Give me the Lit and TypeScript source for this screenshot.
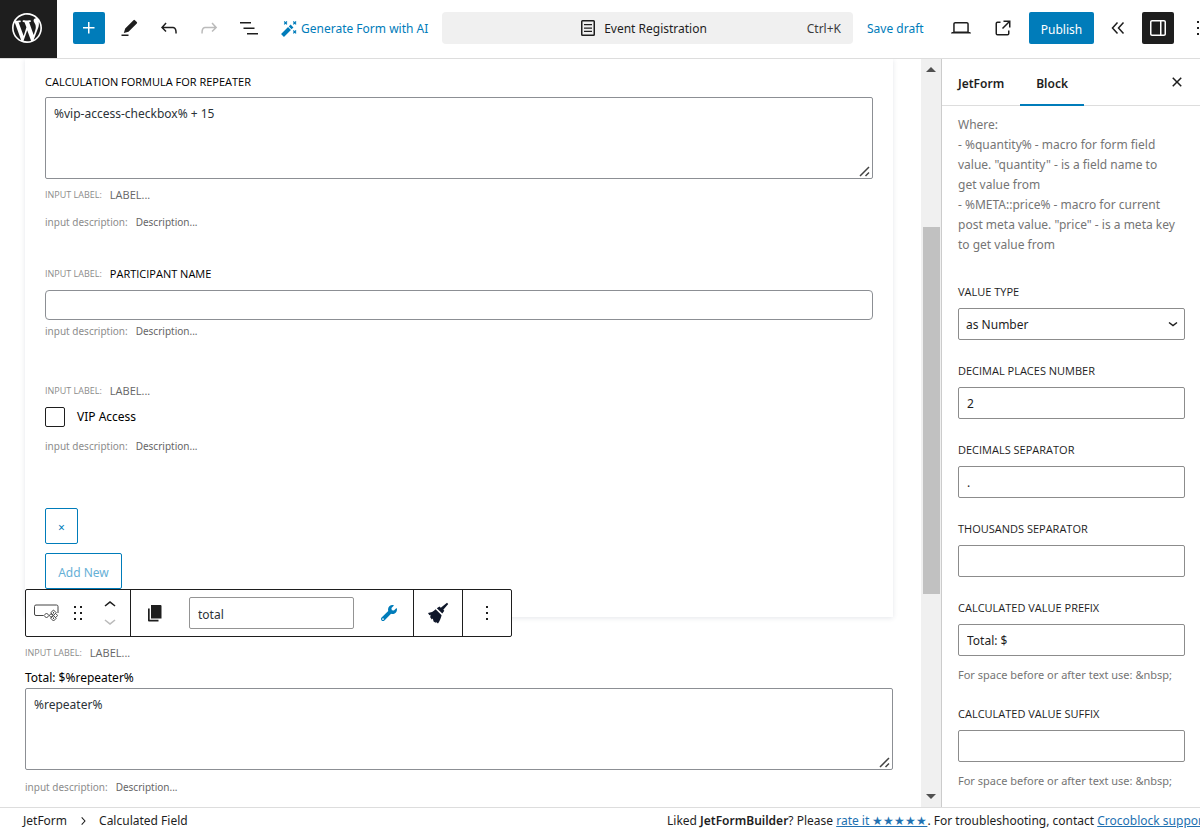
import { LitElement, html, css, svg, nothing } from "lit";
import { customElement } from "lit/decorators.js";
import { styleMap } from "lit/directives/style-map.js";

const icon = (d: string, size = 24) => html`
  <svg width=${size} height=${size} viewBox="0 0 24 24" fill="currentColor" aria-hidden="true">
    <path fill-rule="evenodd" d=${d}></path>
  </svg>`;

const ICONS = {
  plus: "M11 12.5V17.5H12.5V12.5H17.5V11H12.5V6H11V11H6V12.5H11Z",
  edit: "M17.900 4.200 19.800 6.100a1 1 0 0 1 0 1.400L11.500 15.700 6.800 17.100 8.200 12.500 16.500 4.200a1 1 0 0 1 1.400 0ZM4.500 18.500H11.500V20H4.500Z",
  undo: "M18.3 11.7c-.6-.6-1.4-.9-2.3-.9H6.7l2.9-3.3-1.1-1-4.5 5L8.5 16l1-1-2.7-2.7H16c.5 0 .9.2 1.3.5 1 1 1 3.4 1 4.5v.3h1.5v-.2c0-1.5 0-4.3-1.5-5.7z",
  redo: "M15.6 6.5l-1.1 1 2.9 3.3H8c-.9 0-1.7.3-2.3.9-1.4 1.5-1.4 4.2-1.4 5.6v.2h1.5v-.3c0-1.1 0-3.5 1-4.5.3-.3.7-.5 1.3-.5h9.2L14.5 15l1.1 1.1 4.6-4.6-4.6-5z",
  list: "M3 6h11v1.5H3V6Zm3.5 5.5h11V13h-11v-1.5ZM21 17H10v1.5h11V17Z",
  desktop: "M20.5 16h-.7V8c0-1.1-.9-2-2-2H6.2c-1.1 0-2 .9-2 2v8h-.7c-.8 0-1.5.7-1.5 1.5h20c0-.8-.7-1.5-1.5-1.5zM5.7 8c0-.3.2-.5.5-.5h11.6c.3 0 .5.2.5.5v7.6H5.7V8z",
  external: "M19.5 4.5h-7V6h4.44l-5.97 5.97 1.06 1.06L18 7.06v4.44h1.5v-7Zm-13 1a2 2 0 0 0-2 2v10a2 2 0 0 0 2 2h10a2 2 0 0 0 2-2v-3H17v3a.5.5 0 0 1-.5.5h-10a.5.5 0 0 1-.5-.5v-10a.5.5 0 0 1 .5-.5h3V5.5h-3Z",
  drawer: "M18 4H6c-1.1 0-2 .9-2 2v12c0 1.1.9 2 2 2h12c1.1 0 2-.9 2-2V6c0-1.1-.9-2-2-2zm-4 14.5H6c-.3 0-.5-.2-.5-.5V6c0-.3.2-.5.5-.5h8v13zm4.5-.5c0 .3-.2.5-.5.5h-2.5v-13H18c.3 0 .5.2.5.5v12z",
  more: "M13 19h-2v-2h2v2zm0-6h-2v-2h2v2zm0-6h-2V5h2v2z",
  close: "M12 13.06l3.712 3.713 1.061-1.06L13.061 12l3.712-3.712-1.06-1.06L12 10.938 8.288 7.227l-1.061 1.06L10.939 12l-3.712 3.712 1.06 1.061L12 13.061z",
  drag: "M8 7h2V5H8v2zm0 6h2v-2H8v2zm0 6h2v-2H8v2zm6-14v2h2V5h-2zm0 8h2v-2h-2v2zm0 6h2v-2h-2v2z",
  up: "M6.5 12.4L12 8l5.5 4.4-.9 1.2L12 10l-4.5 3.6-1-1.2z",
  down: "M17.5 11.6L12 16l-5.5-4.4.9-1.2L12 14l4.5-3.6 1 1.2z",
  right: "M10.6 6L9.4 7l4.6 5-4.6 5 1.2 1 5.4-6z",
  form: "M6.500 4h11a1.500 1.500 0 0 1 1.500 1.500v13a1.500 1.500 0 0 1-1.500 1.500h-11A1.500 1.500 0 0 1 5 18.500v-13A1.500 1.500 0 0 1 6.500 4Zm0 1.500v13h11v-13h-11ZM8 8h8v1.300H8V8Zm0 3.400h8v1.300H8v-1.300Zm0 3.400h8v1.300H8v-1.300Z",
  copy: "M8 4h9.500a1 1 0 0 1 1 1v12.500H8V4ZM5 7.500h1.700v11.300H15.500v1.700H6a1 1 0 0 1-1-1V7.500Z",
};

const wordpress = svg`<path d="M20 10c0-5.51-4.49-10-10-10C4.48 0 0 4.49 0 10c0 5.52 4.48 10 10 10 5.51 0 10-4.48 10-10zM7.78 15.37L4.37 6.22c.55-.02 1.17-.08 1.17-.08.5-.06.44-1.13-.06-1.11 0 0-1.45.11-2.37.11-.18 0-.37 0-.58-.01C4.12 2.69 6.87 1.11 10 1.11c2.33 0 4.45.87 6.05 2.34-.68-.11-1.65.39-1.65 1.58 0 .74.45 1.36.9 2.1.35.61.55 1.36.55 2.46 0 1.49-1.4 5-1.4 5l-3.03-8.37c.54-.02.82-.17.82-.17.5-.05.44-1.25-.06-1.22 0 0-1.44.12-2.38.12-.87 0-2.33-.12-2.33-.12-.5-.03-.56 1.2-.06 1.22l.92.08 1.26 3.41zM17.41 10c.24-.64.74-1.87.43-4.25.7 1.29 1.05 2.71 1.05 4.25 0 3.29-1.73 6.24-4.4 7.78.97-2.59 1.94-5.2 2.92-7.78zM6.1 18.09C3.12 16.65 1.11 13.53 1.11 10c0-1.3.23-2.48.72-3.59C3.25 10.3 4.67 14.2 6.1 18.09zm4.03-6.63l2.58 6.98c-.86.29-1.76.45-2.71.45-.79 0-1.57-.11-2.29-.33.81-2.38 1.62-4.74 2.42-7.1z"/>`;

interface Setting {
  id: string;
  label: string;
  value: string;
  help?: string;
  options?: string[];
}

const NBSP_HELP = "For space before or after text use: &nbsp;";

const SETTINGS: Setting[] = [
  { id: "value-type", label: "Value type", value: "as Number", options: ["as Number", "as String", "as Date"] },
  { id: "decimal-places", label: "Decimal places number", value: "2" },
  { id: "decimals-separator", label: "Decimals separator", value: "." },
  { id: "thousands-separator", label: "Thousands separator", value: "" },
  { id: "value-prefix", label: "Calculated value prefix", value: "Total: $", help: NBSP_HELP },
  { id: "value-suffix", label: "Calculated value suffix", value: "", help: NBSP_HELP },
];

const shared = css`
  * { box-sizing: border-box; }
  button, input, textarea, select { font: inherit; color: inherit; margin: 0; }
  button { border: 0; background: none; padding: 0; display: flex; align-items: center; justify-content: center; flex: none; }
  a { color: #2271b1; }
  svg { display: block; flex: none; }
`;

@customElement("editor-header")
export class EditorHeader extends LitElement {
  static styles = [shared, css`
    :host { display: block; overflow: hidden; border-bottom: 1px solid #ddd; background: #fff; }
    .bar { display: flex; align-items: center; height: 58px; padding-bottom: 2px; margin-right: -14px; }
    .logo { width: 57px; height: 58px; background: #1e1e1e; color: #fff; padding: 0 4px 2px 0; margin-bottom: -2px; flex: none; display: flex; align-items: center; justify-content: center; }
    .tools { display: flex; align-items: center; gap: 8px; padding-left: 16px; flex: none; }
    .tool { width: 32px; height: 32px; border-radius: 2px; }
    .primary { background: #007cba; color: #fff; }
    .faded { color: #bbb; }
    .link { color: #007cba; text-decoration: none; line-height: 20px; padding-top: 2px; display: flex; align-items: center; gap: 4px; white-space: nowrap; }
    .generate { min-width: 149px; margin-left: 8px; }
    .center { flex: 1; min-width: 0; height: 32px; margin: 0 14px 0 12px; padding: 0 12px 0 0; border-radius: 4px; background: #f0f0f0; display: grid; grid-template-columns: 1fr auto 1fr; align-items: center; }
    .title { grid-column: 2; display: flex; align-items: center; gap: 4px; }
    .keys { justify-self: end; color: #3c3c3c; }
    .actions { display: flex; align-items: center; flex: none; }
    .draft { min-width: 58px; margin-right: 20px; }
    .preview { margin-right: 10px; }
    .view { margin-right: 10px; }
    .publish { height: 32px; min-width: 65px; padding: 2px 8px 0; border-radius: 2px; margin-right: 8px; }
    .active { background: #1e1e1e; color: #fff; margin: 0 8px; }
  `];

  render() {
    return html`
      <div class="bar">
        <a class="logo" href="#" aria-label="View forms">
          <svg width="30" height="30" viewBox="0 0 20 20" fill="currentColor">${wordpress}</svg>
        </a>
        <div class="tools">
          <button class="tool primary" aria-label="Toggle block inserter">${icon(ICONS.plus)}</button>
          <button class="tool" aria-label="Tools">${icon(ICONS.edit)}</button>
          <button class="tool" aria-label="Undo">${icon(ICONS.undo)}</button>
          <button class="tool faded" aria-label="Redo">${icon(ICONS.redo)}</button>
          <button class="tool" aria-label="Document overview">${icon(ICONS.list)}</button>
          <a class="link generate" href="#">
            <svg width="16" height="16" viewBox="0 0 16 16" fill="none" stroke="currentColor">
              <path d="M1.500 14.500 8.500 7.500" stroke-width="4"></path>
              <path d="M9.200 6.800 11 5" stroke-width="4"></path>
              <path d="M3.200.500 6 3.300M6 .500 3.200 3.300M12.300.500l2.800 2.800M15.100.500l-2.800 2.800M12.300 9.500l2.800 2.800M15.100 9.500l-2.800 2.800" stroke-width="1.200"></path>
            </svg>
            <span>Generate Form with AI</span>
          </a>
        </div>
        <button class="center">
          <span class="title">${icon(ICONS.form)}<span>Event Registration</span></span>
          <span class="keys">Ctrl+K</span>
        </button>
        <div class="actions">
          <a class="link draft" href="#">Save draft</a>
          <button class="tool view" aria-label="View">${icon(ICONS.desktop)}</button>
          <button class="tool preview" aria-label="Open in new tab">${icon(ICONS.external)}</button>
          <button class="publish primary">Publish</button>
          <button class="tool" aria-label="Collapse">
            <svg width="24" height="24" viewBox="0 0 24 24" fill="none" stroke="currentColor" stroke-width="1.500">
              <path d="M11.500 6.500 6.500 12l5 5.500M17.500 6.500 12.500 12l5 5.500"></path>
            </svg>
          </button>
          <button class="tool active" aria-label="Settings">${icon(ICONS.drawer)}</button>
          <button class="tool" aria-label="Options">${icon(ICONS.more)}</button>
        </div>
      </div>`;
  }
}

@customElement("block-toolbar")
export class BlockToolbar extends LitElement {
  static styles = [shared, css`
    :host { display: flex; height: 48px; background: #fff; border: 1px solid #1e1e1e; border-radius: 2px; }
    .group { display: flex; align-items: center; border-right: 1px solid #1e1e1e; }
    .group:last-child { border-right: 0; }
    .first { padding: 0 8px; }
    .drag { width: 20px; margin-left: 8px; }
    .mover { display: flex; flex-direction: column; margin-left: 10px; }
    .mover button { width: 24px; height: 16px; overflow: hidden; }
    .off { color: #bbb; }
    .square { width: 48px; height: 46px; }
    .name { width: 165px; height: 32px; margin: 0 11px 0 10px; padding: 2px 8px 0; border: 1px solid #949494; border-radius: 2px; color: #2c3338; outline: 0; }
    .wrench { color: #007cba; }
  `];

  render() {
    return html`
      <div class="group first">
        <button aria-label="Calculated Field">
          <svg width="26" height="24" viewBox="0 0 26 24" fill="none" stroke="#444">
            <path d="M9.500 14.500H2A1.500 1.500 0 0 1 .5 13V5.500A1.500 1.500 0 0 1 2 4h20.500A1.500 1.500 0 0 1 24 5.500V12"></path>
            <path d="m12.500 12 2.500 2.500-2.500 2.500-2.500-2.500ZM19.500 9l2.700 2.700-2.700 2.700-2.700-2.700ZM19.500 14.600l2.700 2.700-2.700 2.700-2.700-2.700ZM17 12.700l1.800 1.800-1.800 1.800-1.800-1.800ZM22 12.700l1.500 1.800-1.500 1.800"></path>
            <path d="M19.500 11v1.500M19.500 16.500v1.500"></path>
          </svg>
        </button>
        <button class="drag" aria-label="Drag">${icon(ICONS.drag)}</button>
        <div class="mover">
          <button aria-label="Move up">${icon(ICONS.up)}</button>
          <button class="off" aria-label="Move down">${icon(ICONS.down)}</button>
        </div>
      </div>
      <div class="group">
        <button class="square" aria-label="Copy">${icon(ICONS.copy)}</button>
        <input class="name" aria-label="Form field name" .value=${"total"} />
        <button class="square wrench" aria-label="Edit field">
          <svg width="16" height="16" viewBox="0 0 512 512" fill="currentColor">
            <path fill-rule="evenodd" d="M507.700 109.100c-2.200-9-13.500-12.100-20.100-5.500l-74.400 74.400-67.900-11.300L334 98.900l74.400-74.400c6.600-6.600 3.400-17.900-5.700-20.200-47.400-11.700-99.600.9-136.600 37.900-39.600 39.600-50.500 97.100-34.100 147.200L18.700 402.800c-25 25-25 65.500 0 90.500s65.500 25 90.500 0l213.200-213.200c50.100 16.700 107.500 5.700 147.400-34.200 37.100-37.100 49.700-89.300 37.900-136.800zM64 476a28 28 0 1 1 0-56 28 28 0 0 1 0 56z"></path>
          </svg>
        </button>
      </div>
      <div class="group">
        <button class="square" aria-label="Styles">
          <svg width="22" height="22" viewBox="0 0 22 22" fill="#0f172a">
            <path d="M20 .8 21.200 2 16.300 7.800 17.300 8.800 15.300 11.600 9.800 6.200 12.500 4.600 13.800 5.700Z"></path>
            <path d="M8.600 7.200 14.600 13.200C14 16 13 18.500 11 21.500L8.600 19.800 9 21 6.600 19.400 5.800 16.400 4.800 17.600 3.200 15.200 3.600 12.800 2.400 13.200 1 11C3.600 10.600 6.600 9.600 8.600 7.200Z"></path>
          </svg>
        </button>
      </div>
      <div class="group">
        <button class="square" aria-label="Options">${icon(ICONS.more)}</button>
      </div>`;
  }
}

@customElement("form-canvas")
export class FormCanvas extends LitElement {
  static styles = [shared, css`
    :host { display: flex; min-width: 0; min-height: 0; background: #fff; overflow: hidden; }
    .content { flex: 1; min-width: 0; padding: 0 28px 0 25px; }
    .card { padding: 13px 20px 28px; box-shadow: 0 1px 5px rgba(30, 50, 80, 0.12); display: flex; flex-direction: column; align-items: stretch; }
    .heading { font-family: "Open Sans", sans-serif; font-size: 11px; font-weight: 500; line-height: 20px; text-transform: uppercase; color: #000; margin-bottom: 5px; }
    .meta { display: flex; gap: 8px; line-height: 20px; font-family: "Noto Sans", "Open Sans", sans-serif; font-size: 10px; color: #666; }
    .meta.upper { font-family: "Open Sans", sans-serif; text-transform: uppercase; font-size: 11px; font-weight: 500; }
    .hint { color: #8c8c8c; }
    .upper .hint { font-size: 9px; font-weight: 400; }
    .strong { color: #000; }
    .area { position: relative; display: flex; }
    textarea { flex: 1; height: 82px; padding: 6px 8px; border: 1px solid #8c8f94; border-radius: 2px; line-height: 20px; color: #2c3338; background: #fff; resize: none; outline: 0; }
    .grip { position: absolute; right: 2px; bottom: 2px; }
    .text { height: 30px; border: 1px solid #8c8f94; border-radius: 4px; padding: 0 8px; outline: 0; }
    .field { display: flex; flex-direction: column; }
    .after { margin-top: 6px; }
    .described { margin-top: 7px; }
    .tight { margin-top: 1px; }
    .second { margin-top: 32px; }
    .third { margin-top: 40px; }
    .check { display: flex; align-items: center; gap: 12px; margin: 6px 0 2px; line-height: 20px; color: #000; }
    .check input { appearance: none; width: 20px; height: 20px; border: 1px solid #1e1e1e; border-radius: 2px; background: #fff; }
    .outline { align-self: flex-start; height: 36px; padding: 2px 11px 0; border: 1px solid #007cba; border-radius: 2px; color: #007cba; }
    .remove { margin: 52px 0 9px; width: 33px; padding: 2px 0 0; }
    .add { color: #66b0d6; min-width: 77px; }
    .block { position: relative; margin-top: 26px; display: flex; flex-direction: column; }
    block-toolbar { position: absolute; left: 0; bottom: calc(100% + 6px); }
    .result { margin-top: 5px; line-height: 20px; color: #000; }
    .track { width: 20px; flex: none; background: #f0f0f0; display: flex; flex-direction: column; align-items: center; padding: 8px 0; }
    .rail { flex: 1; width: 17px; display: flex; flex-direction: column; }
    .thumb { background: #c1c1c1; }
  `];

  private grip() {
    return html`<svg class="grip" width="12" height="12" viewBox="0 0 12 12" stroke="#444" stroke-width="1.500" fill="none">
      <path d="M1 11 10 2M6.500 11 10 7.500"></path></svg>`;
  }

  private meta(label: string, strong = false) {
    return html`<div class="meta upper"><span class="hint">Input label:</span><span class=${strong ? "strong" : ""}>${label}</span></div>`;
  }

  private description(spacing: string) {
    return html`<div class="meta ${spacing}"><span class="hint">input description:</span><span>Description...</span></div>`;
  }

  render() {
    return html`
      <div class="content">
        <div class="card">
          <div class="field">
            <label class="heading" for="formula">Calculation formula for repeater</label>
            <div class="area"><textarea id="formula" .value=${"%vip-access-checkbox% + 15"}></textarea>${this.grip()}</div>
            <div class="after">${this.meta("Label...")}</div>
            ${this.description("described")}
          </div>
          <div class="field second">
            ${this.meta("Participant name", true)}
            <input class="text after" aria-label="Participant name" />
            ${this.description("tight")}
          </div>
          <div class="field third">
            ${this.meta("Label...")}
            <label class="check"><input type="checkbox" />VIP Access</label>
            ${this.description("described")}
          </div>
          <button class="outline remove" aria-label="Remove row">×</button>
          <button class="outline add">Add New</button>
        </div>
        <div class="block">
          <block-toolbar></block-toolbar>
          ${this.meta("Label...")}
          <label class="result" for="result">Total: $%repeater%</label>
          <div class="area"><textarea id="result" .value=${"%repeater%"}></textarea>${this.grip()}</div>
          ${this.description("described")}
        </div>
      </div>
      <div class="track">
        <svg width="10" height="5" viewBox="0 0 10 5" fill="#505050"><path d="M0 5 5 0l5 5Z"></path></svg>
        <div class="rail">
          <div style=${styleMap({ height: "21.500%" })}></div>
          <div class="thumb" style=${styleMap({ height: "50.800%" })}></div>
        </div>
        <svg width="10" height="5" viewBox="0 0 10 5" fill="#505050"><path d="M0 0 5 5l5-5Z"></path></svg>
      </div>`;
  }
}

@customElement("block-sidebar")
export class BlockSidebar extends LitElement {
  static styles = [shared, css`
    :host { display: block; border-left: 1px solid #ccc; background: #fff; overflow: hidden; }
    .tabs { display: flex; align-items: center; height: 47px; border-bottom: 1px solid #ddd; padding-right: 7px; }
    .tab { height: 47px; padding: 4px 16px 0; font-weight: 600; border-bottom: 2px solid transparent; color: #1e1e1e; }
    .current { border-bottom-color: #007cba; }
    .close { width: 32px; height: 32px; margin-left: auto; }
    .body { padding: 9px 15px 0 16px; }
    .note { margin: 0; line-height: 20px; color: #757575; }
    .fields { display: flex; flex-direction: column; gap: 23px; margin-top: 29px; }
    .setting { display: flex; flex-direction: column; }
    .setting label { font-family: "Open Sans", sans-serif; font-size: 11px; font-weight: 500; line-height: 16px; text-transform: uppercase; color: #1e1e1e; margin-bottom: 8px; }
    .control { position: relative; display: flex; }
    .control input, .control select { flex: 1; min-width: 0; height: 32px; padding: 0 8px; border: 1px solid #8c8c8c; border-radius: 2px; background: #fff; color: #1e1e1e; outline: 0; appearance: none; }
    .control select { padding: 0 7px; }
    .arrow { position: absolute; right: 4px; top: 8px; pointer-events: none; }
    .help { margin: 11px 0 0; line-height: 16px; color: #757575; font-size: 11px; }
  `];

  render() {
    return html`
      <div class="tabs" role="tablist">
        <button class="tab" role="tab" aria-selected="false">JetForm</button>
        <button class="tab current" role="tab" aria-selected="true">Block</button>
        <button class="close" aria-label="Close settings">${icon(ICONS.close)}</button>
      </div>
      <div class="body">
        <p class="note">
          Where:<br />- %quantity% - macro for form field<br />value. "quantity" - is a field name to<br />get value from<br />-
          %META::price% - macro for current<br />post meta value. "price" - is a meta key<br />to get value from
        </p>
        <div class="fields">
          ${SETTINGS.map((s) => html`
            <div class="setting">
              <label for=${s.id}>${s.label}</label>
              <div class="control">
                ${s.options
                  ? html`<select id=${s.id}>${s.options.map((o) => html`<option ?selected=${o === s.value}>${o}</option>`)}</select>
                      <svg class="arrow" width="16" height="16" viewBox="0 0 16 16" fill="none" stroke="#1e1e1e" stroke-width="1.500"><path d="M4 6.500 8 9.500l4-3"></path></svg>`
                  : html`<input id=${s.id} .value=${s.value} />`}
              </div>
              ${s.help ? html`<p class="help">${s.help}</p>` : nothing}
            </div>`)}
        </div>
      </div>`;
  }
}

@customElement("app-root")
export class AppRoot extends LitElement {
  static styles = [shared, css`
    :host { display: grid; grid-template-rows: auto 1fr auto; height: 100vh; overflow: hidden; background: #fff; color: #1e1e1e; font-family: "Noto Sans", "Open Sans", sans-serif; font-size: 12px; }
    .workspace { display: grid; grid-template-columns: 1fr 259px; min-height: 0; }
    footer { display: flex; border-top: 1px solid #ddd; height: 21px; line-height: 26px; white-space: nowrap; overflow: hidden; padding-left: 23px; }
    nav { display: flex; align-items: center; gap: 8px; height: 26px; flex: 1; }
    .credit { flex: 0 0 533px; overflow: hidden; }
    b { font-weight: 600; }
  `];

  render() {
    return html`
      <editor-header></editor-header>
      <div class="workspace">
        <form-canvas></form-canvas>
        <block-sidebar></block-sidebar>
      </div>
      <footer>
        <nav aria-label="Breadcrumb"><span>JetForm</span>${icon(ICONS.right, 16)}<span>Calculated Field</span></nav>
        <div class="credit">
          Liked <b>JetFormBuilder</b>? Please <a href="#">rate it ★★★★★</a>. For troubleshooting, contact
          <a href="#">Crocoblock support</a>
        </div>
      </footer>`;
  }
}
